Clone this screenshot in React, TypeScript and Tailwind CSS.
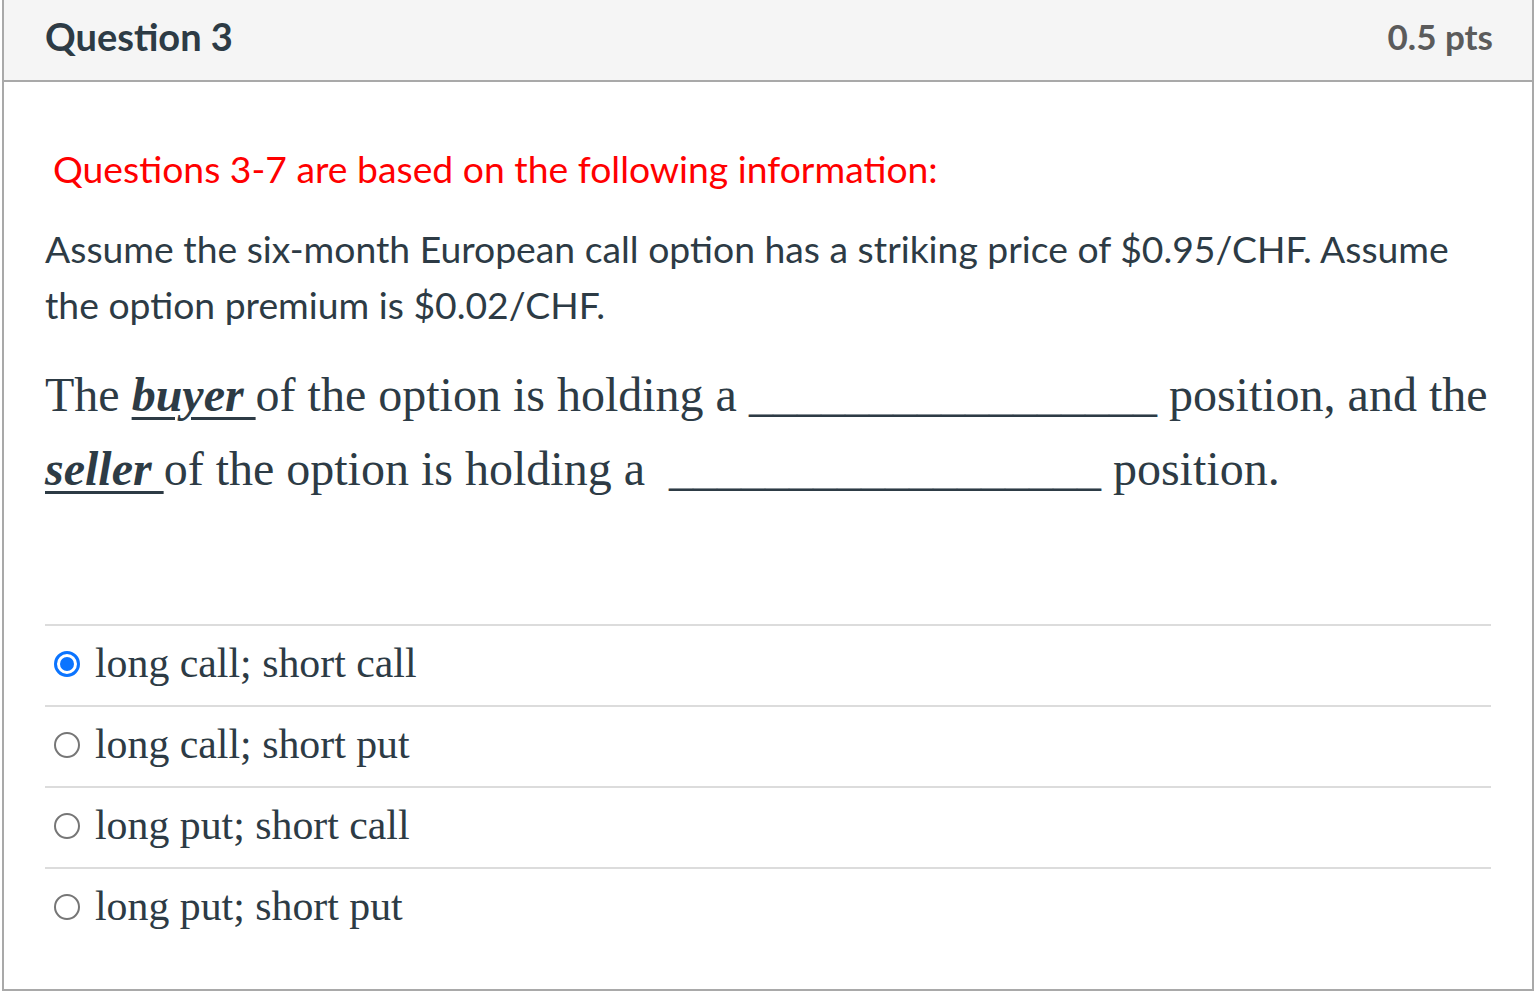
import React from 'react';

const options = [
  { label: 'long call; short call', checked: true },
  { label: 'long call; short put', checked: false },
  { label: 'long put; short call', checked: false },
  { label: 'long put; short put', checked: false },
];

function Radio({ checked }: { checked: boolean }) {
  if (checked) {
    return (
      <span className="flex h-[26px] w-[26px] shrink-0 items-center justify-center rounded-full border-[3px] border-[#0b74ff] bg-white">
        <span className="h-[14px] w-[14px] rounded-full bg-[#0b74ff]" />
      </span>
    );
  }
  return <span className="h-[26px] w-[26px] shrink-0 rounded-full border-2 border-[#767676] bg-white" />;
}

export default function App() {
  return (
    <div className="min-h-[999px] bg-white" style={{ fontFamily: 'Lato, "Open Sans", sans-serif' }}>
      <div className="ml-[2px] w-[1532px] border-x-2 border-b-2 border-[#a9a9a9]">
        {/* Header */}
        <div className="flex h-[82px] items-center justify-between border-b-2 border-[#a9a9a9] bg-[#f5f5f5] pl-[41px] pr-[39px] pb-[8px]">
          <h2 className="text-[38px] font-bold text-[#2d3b45]">Question 3</h2>
          <span className="text-[35px] font-bold text-[#5b5b5b]">0.5 pts</span>
        </div>

        {/* Body */}
        <div className="px-[41px] pt-[63px] pb-[41px] text-[#2d3b45]">
          <p className="pl-[8px] text-[37.3px] leading-[48px] text-[#ff0000]">
            Questions 3-7 are based on the following information:
          </p>
          <p className="mt-[28px] text-[37.3px] leading-[56px]">
            Assume the six-month European call option has a striking price of $0.95/CHF. Assume
            <br />
            the option premium is $0.02/CHF.
          </p>
          <p
            className="mt-[25px] whitespace-pre text-[48px] leading-[74px]"
            style={{ fontFamily: '"Liberation Serif", "Times New Roman", serif' }}
          >
            The <strong className="italic underline decoration-[3px] underline-offset-[6px]">buyer </strong>
            of the option is holding a _________________ position, and the
            <br />
            <strong className="italic underline decoration-[3px] underline-offset-[6px]">seller </strong>
            of the option is holding a{'  '}__________________ position.
          </p>

          <div className="mt-[118px]">
            {options.map((opt) => (
              <div
                key={opt.label}
                className="flex h-[81px] items-center gap-[15px] border-t-2 border-[#dcdcdc] pb-[4px] pl-[9px]"
                style={{ fontFamily: '"Liberation Serif", "Times New Roman", serif' }}
              >
                <Radio checked={opt.checked} />
                <span className="text-[41.8px] leading-none">{opt.label}</span>
              </div>
            ))}
          </div>
        </div>
      </div>
    </div>
  );
}
